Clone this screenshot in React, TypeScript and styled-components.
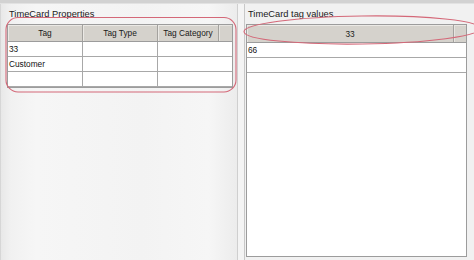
import React from 'react';
import styled, { createGlobalStyle } from 'styled-components';

const GlobalStyle = createGlobalStyle`
  html, body {
    margin: 0;
    padding: 0;
    background: #f0f0f0;
  }
  body {
    font-family: "Liberation Sans", Arial, sans-serif;
    color: #111;
  }
`;

const Page = styled.div`
  position: relative;
  width: 474px;
  height: 260px;
  display: flex;
  flex-direction: column;
  overflow: hidden;
  background: #f0f0f0;
`;

const TopStrip = styled.div`
  height: 3px;
  background: #d2d2d2;
  border-bottom: 1px solid #e2e2e2;
`;

const Panels = styled.div`
  flex: 1;
  display: flex;
  flex-direction: row;
`;

const Panel = styled.div<{ $width?: number }>`
  ${(p) => (p.$width ? `width: ${p.$width}px;` : 'flex: 1;')}
  display: flex;
  flex-direction: column;
  box-sizing: border-box;
  padding: 4px 0 3px 0;
  background: linear-gradient(
    90deg,
    #e8e8e8 0px,
    #f1f1f1 10px,
    #f6f6f6 35px,
    #f3f3f3 60%,
    #f6f6f6 88%,
    #ececec 100%
  );
  border-left: 1px solid #d6d6d6;
`;

const LeftPanel = styled(Panel)`
  padding-left: 6px;
  padding-right: 4px;
`;

const RightPanel = styled(Panel)`
  padding-left: 1px;
  padding-right: 7px;
  background: #f1f1f1;
  border-left: 1px solid #c8c8c8;
`;

const Splitter = styled.div`
  width: 6px;
  background: #f4f4f4;
  border-left: 1px solid #cfcfcf;
`;

const Title = styled.div`
  font-size: 9.3px;
  line-height: 12px;
  height: 12px;
  margin-left: 2px;
  margin-bottom: 4px;
  color: #1a1a1a;
  white-space: nowrap;
`;

const Grid = styled.div<{ $fill?: boolean }>`
  display: flex;
  flex-direction: column;
  border: 1px solid #9c9c9c;
  background: ${(p) => (p.$fill ? '#ffffff' : '#f0f0f0')};
  ${(p) => (p.$fill ? 'flex: 1;' : '')}
  font-size: 8.3px;
`;

const HeaderRow = styled.div<{ $cols: string; $h: number }>`
  display: grid;
  grid-template-columns: ${(p) => p.$cols};
  height: ${(p) => p.$h}px;
  background: #d5d2cc;
  border-bottom: 1px solid #9c9c9c;
`;

const HeaderCell = styled.div`
  display: flex;
  align-items: center;
  justify-content: center;
  border-right: 1px solid #a4a29e;
  box-shadow: inset 1px 1px 0 #ebe9e5;
  color: #1a1a1a;
  white-space: nowrap;
`;

const HeaderFiller = styled.div`
  background: #d5d2cc;
  box-shadow: inset 1px 1px 0 #e6e4e0;
`;

const Row = styled.div<{ $cols: string }>`
  display: grid;
  grid-template-columns: ${(p) => p.$cols};
  height: 14px;
  background: #ffffff;
  border-bottom: 1px solid #a8a8a8;
`;

const Cell = styled.div`
  display: flex;
  align-items: center;
  padding-left: 1px;
  border-right: 1px solid #a8a8a8;
  white-space: nowrap;
  color: #111;
  &:last-child {
    border-right: none;
  }
`;

const Overlay = styled.svg`
  position: absolute;
  left: 0;
  top: 0;
  pointer-events: none;
`;

const props = [['33', '', ''], ['Customer', '', ''], ['', '', '']];
const values = [['66'], ['']];

const App = () => {
  return (
    <>
      <GlobalStyle />
      <Page>
        <TopStrip />
        <Panels>
          <LeftPanel $width={237}>
            <Title>TimeCard Properties</Title>
            <Grid>
              <HeaderRow $cols="75px 75px 61px 1fr" $h={16}>
                <HeaderCell>Tag</HeaderCell>
                <HeaderCell>Tag Type</HeaderCell>
                <HeaderCell>Tag Category</HeaderCell>
                <HeaderFiller />
              </HeaderRow>
              {props.map((r, i) => (
                <Row key={`prop_${i}`} $cols="75px 75px 1fr">
                  {r.map((c, j) => (
                    <Cell key={`prop_${i}_${j}`}>{c}</Cell>
                  ))}
                </Row>
              ))}
            </Grid>
          </LeftPanel>
          <Splitter />
          <RightPanel>
            <Title>TimeCard tag values</Title>
            <Grid $fill>
              <HeaderRow $cols="207px 1fr" $h={17}>
                <HeaderCell>33</HeaderCell>
                <HeaderFiller />
              </HeaderRow>
              {values.map((r, i) => (
                <Row key={`val_${i}`} $cols="1fr">
                  {r.map((c, j) => (
                    <Cell key={`val_${i}_${j}`}>{c}</Cell>
                  ))}
                </Row>
              ))}
            </Grid>
          </RightPanel>
        </Panels>
        <Overlay width={474} height={260} viewBox="0 0 474 260">
          <rect
            x={6}
            y={17.5}
            width={230}
            height={74.5}
            rx={12}
            fill="none"
            stroke="#d46878"
            strokeWidth={1.1}
          />
          <ellipse
            cx={362}
            cy={30}
            rx={118}
            ry={14}
            transform="rotate(-0.8 362 30)"
            fill="none"
            stroke="#d46878"
            strokeWidth={1.1}
          />
        </Overlay>
      </Page>
    </>
  );
};

export default App;
